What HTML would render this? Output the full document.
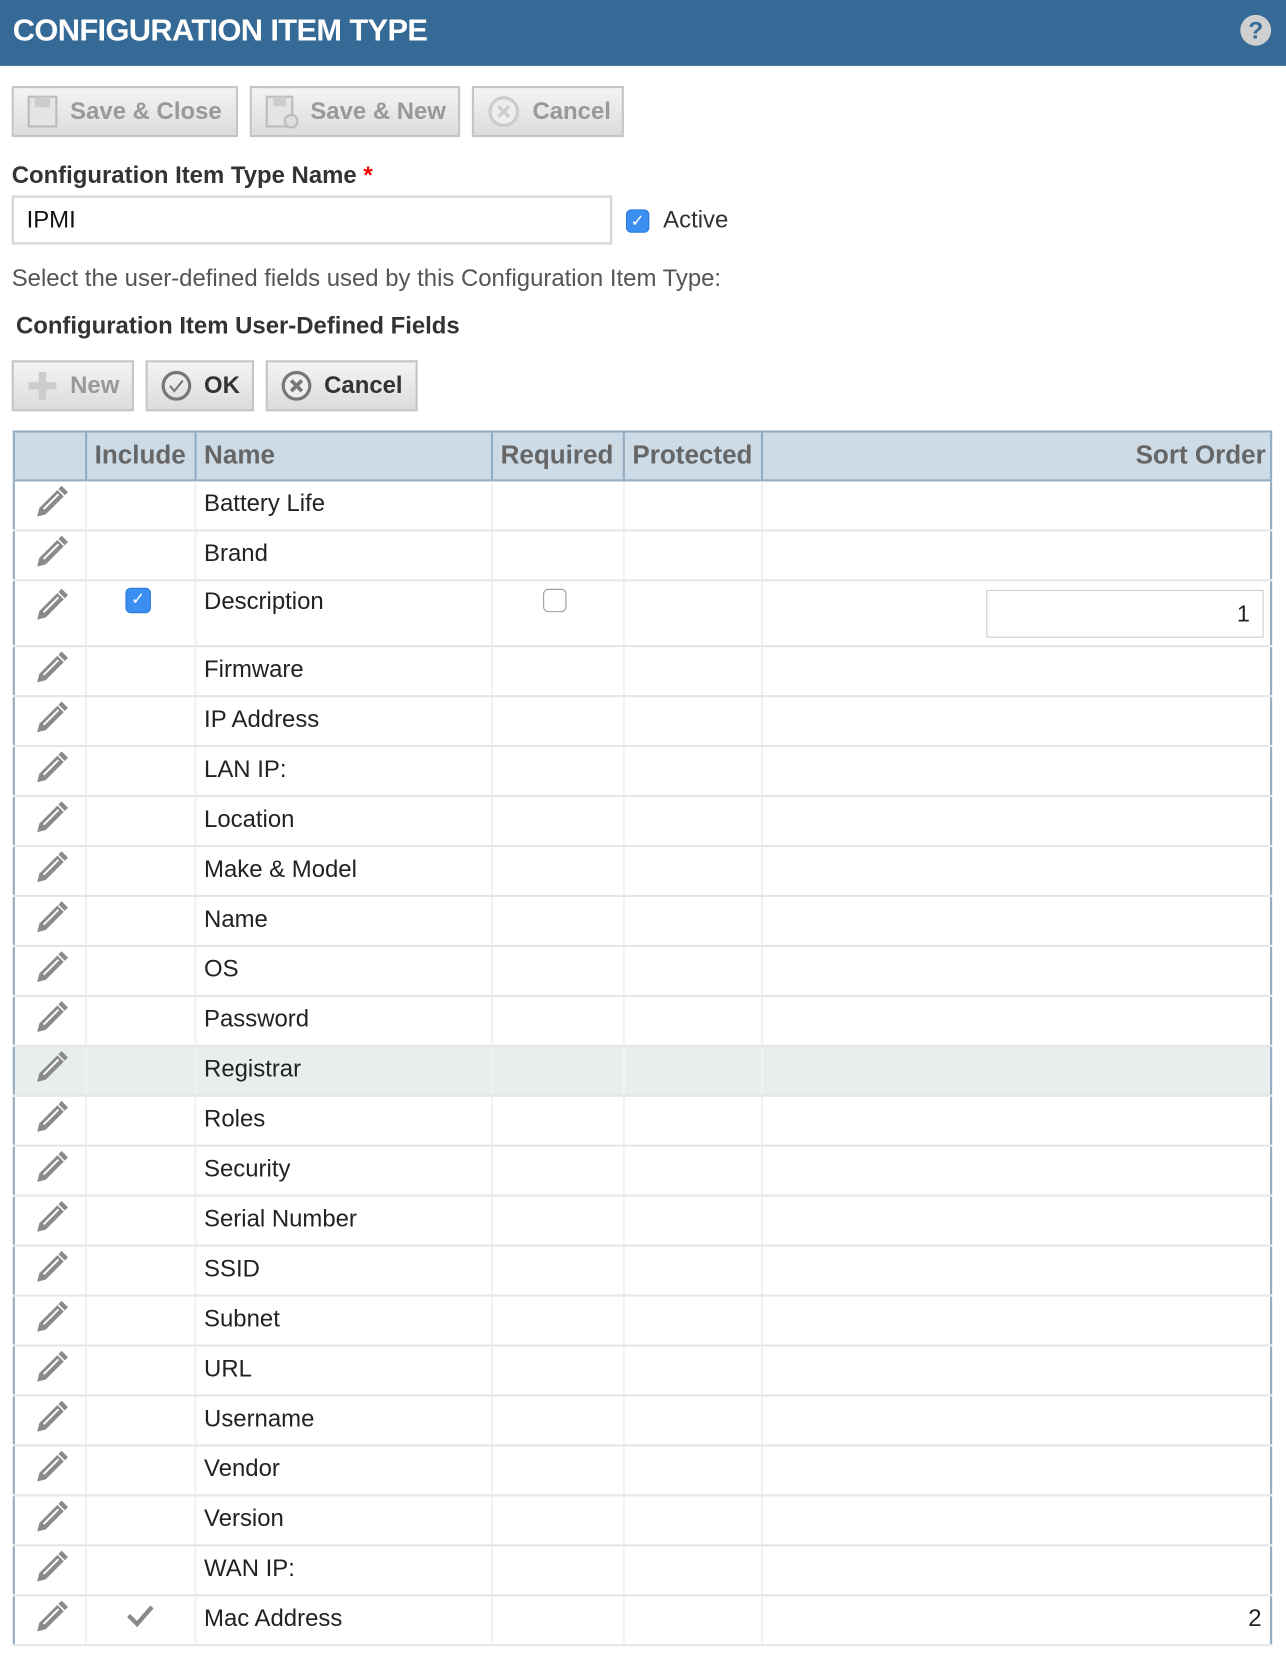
<!DOCTYPE html>
<html><head><meta charset="utf-8"><style>
*{box-sizing:border-box;margin:0;padding:0}
html,body{width:1286px;height:1666px;overflow:hidden;background:#fff}
#w{position:absolute;left:0;top:0;width:1210px;height:1568px;transform:scale(1.0628);transform-origin:0 0;font-family:"Liberation Sans",sans-serif;color:#333}
.a{position:absolute}
.hdr{left:0;top:0;width:1210px;height:62px;background:#366a96}
.title{left:12px;top:13px;color:#fff;font-weight:bold;font-size:29px;letter-spacing:-0.6px}
.help{left:1167px;top:14px;width:29px;height:29px;border-radius:50%;background:#cfcfcf;color:#366a96;font-weight:bold;font-size:23px;text-align:center;line-height:29px}
.btn{position:absolute;height:48px;border:2px solid #c4c4c4;background:linear-gradient(#f4f4f4,#dcdcdc);font-weight:bold;font-size:22.5px;color:#999;display:flex;align-items:center;padding-left:12px;gap:11px;white-space:nowrap}
.dark{color:#333}
.lbl{font-weight:bold;font-size:22.5px;color:#333}
.inp{border:2px solid #d4d4d4;background:#fff}
.cb{border-radius:5px;background:#3b8ff0;border:1px solid #2a78d8;color:#fff;text-align:center;font-size:16px;line-height:22px}
table{position:absolute;left:12px;top:405px;width:1185px;border-collapse:collapse;border:2px solid #93adc4;font-size:22.5px}
th{background:#cddbe6;height:46px;border-left:2px solid #93adc4;border-bottom:2px solid #93adc4;color:#666;font-size:24.5px;text-align:left;padding-left:7px;white-space:nowrap}
td{height:47px;border-left:2px solid #f2f2f2;border-bottom:2px solid #e6e6e6;padding-left:7px;padding-bottom:4px;vertical-align:middle;color:#222;white-space:nowrap}
tr.hl td{background:#e8eeee}
td.p{padding-left:18px;border-left:none;padding-bottom:2px}
</style></head><body><div id="w">
<div class="a hdr"></div>
<div class="a title">CONFIGURATION ITEM TYPE</div>
<div class="a help">?</div>

<div class="btn" style="left:11px;top:81px;width:213px"><svg width="30" height="32" viewBox="0 0 30 32"><rect x="2" y="2" width="26" height="28" fill="#e4e4e4" stroke="#bbb" stroke-width="2"/><rect x="8" y="2" width="14" height="10" fill="#ccc"/></svg>Save &amp; Close</div>
<div class="btn" style="left:235px;top:81px;width:198px"><svg width="32" height="32" viewBox="0 0 32 32"><rect x="2" y="2" width="24" height="28" fill="#e4e4e4" stroke="#bbb" stroke-width="2"/><rect x="8" y="2" width="12" height="9" fill="#ccc"/><circle cx="25" cy="25" r="6" fill="#ddd" stroke="#bbb" stroke-width="2"/></svg>Save &amp; New</div>
<div class="btn" style="left:444px;top:81px;width:143px"><svg width="32" height="32" viewBox="0 0 32 32"><circle cx="16" cy="16" r="13" fill="#eee" stroke="#ccc" stroke-width="3"/><path d="M11 11l10 10M21 11l-10 10" stroke="#ccc" stroke-width="3"/></svg>Cancel</div>

<div class="a lbl" style="left:11px;top:152px">Configuration Item Type Name <span style="color:#e00">*</span></div>
<div class="a inp" style="left:11px;top:184px;width:565px;height:46px"></div>
<div class="a" style="left:25px;top:194px;font-size:22.5px;color:#111">IPMI</div>
<div class="a cb" style="left:589px;top:197px;width:22px;height:22px">✓</div>
<div class="a" style="left:624px;top:194px;font-size:22.5px">Active</div>
<div class="a" style="left:11px;top:249px;font-size:22.5px;color:#555">Select the user-defined fields used by this Configuration Item Type:</div>
<div class="a lbl" style="left:15px;top:294px">Configuration Item User-Defined Fields</div>

<div class="btn" style="left:11px;top:339px;width:115px"><svg width="30" height="30" viewBox="0 0 30 30"><path d="M15 2v26M2 15h26" stroke="#ccc" stroke-width="7"/></svg>New</div>
<div class="btn dark" style="left:137px;top:339px;width:102px"><svg width="30" height="30" viewBox="0 0 30 30"><circle cx="15" cy="15" r="12.5" fill="none" stroke="#777" stroke-width="3"/><path d="M9 15l4 5 8-10" fill="none" stroke="#777" stroke-width="2"/></svg>OK</div>
<div class="btn dark" style="left:250px;top:339px;width:143px"><svg width="30" height="30" viewBox="0 0 30 30"><circle cx="15" cy="15" r="12.5" fill="#eee" stroke="#777" stroke-width="3"/><path d="M10 10l10 10M20 10l-10 10" stroke="#777" stroke-width="3.5"/></svg>Cancel</div>

<svg width="0" height="0" style="position:absolute"><defs><g id="pen"><path d="M3 30l2-8L22 5l6 6L11 28z" fill="#8a8a8a"/><path d="M9 23L23 9" stroke="#fff" stroke-width="1.8"/><path d="M23 4l3-3 6 6-3 3z" fill="#8a8a8a"/></g></defs></svg>
<table>
<tr><th style="width:68px;border-left:none"></th><th style="width:103px">Include</th><th style="width:279px">Name</th><th style="width:124px">Required</th><th style="width:130px">Protected</th><th style="text-align:right;padding-right:4px">Sort Order</th></tr>
<tr><td class="p"><svg width="32" height="32"><use href="#pen"/></svg></td><td></td><td>Battery Life</td><td></td><td></td><td></td></tr>
<tr><td class="p"><svg width="32" height="32"><use href="#pen"/></svg></td><td></td><td>Brand</td><td></td><td></td><td></td></tr>
<tr><td class="p" style="height:62px;vertical-align:top;padding-top:6px"><svg width="32" height="32"><use href="#pen"/></svg></td><td style="vertical-align:top;padding-top:6px;padding-left:36px"><div class="cb" style="width:24px;height:24px">✓</div></td><td style="vertical-align:top;padding-top:6px">Description</td><td style="vertical-align:top;padding-top:7px;padding-left:47px"><div style="width:22px;height:22px;border:1px solid #999;border-radius:5px"></div></td><td></td><td style="padding-left:210px;padding-bottom:0"><div class="inp" style="width:261px;height:45px;text-align:right;padding:9px 12px 0 0;font-size:22px;border-width:1px;border-color:#ccc">1</div></td></tr>
<tr><td class="p"><svg width="32" height="32"><use href="#pen"/></svg></td><td></td><td>Firmware</td><td></td><td></td><td></td></tr>
<tr><td class="p"><svg width="32" height="32"><use href="#pen"/></svg></td><td></td><td>IP Address</td><td></td><td></td><td></td></tr>
<tr><td class="p"><svg width="32" height="32"><use href="#pen"/></svg></td><td></td><td>LAN IP:</td><td></td><td></td><td></td></tr>
<tr><td class="p"><svg width="32" height="32"><use href="#pen"/></svg></td><td></td><td>Location</td><td></td><td></td><td></td></tr>
<tr><td class="p"><svg width="32" height="32"><use href="#pen"/></svg></td><td></td><td>Make &amp; Model</td><td></td><td></td><td></td></tr>
<tr><td class="p"><svg width="32" height="32"><use href="#pen"/></svg></td><td></td><td>Name</td><td></td><td></td><td></td></tr>
<tr><td class="p"><svg width="32" height="32"><use href="#pen"/></svg></td><td></td><td>OS</td><td></td><td></td><td></td></tr>
<tr><td class="p"><svg width="32" height="32"><use href="#pen"/></svg></td><td></td><td>Password</td><td></td><td></td><td></td></tr>
<tr class="hl"><td class="p"><svg width="32" height="32"><use href="#pen"/></svg></td><td></td><td>Registrar</td><td></td><td></td><td></td></tr>
<tr><td class="p"><svg width="32" height="32"><use href="#pen"/></svg></td><td></td><td>Roles</td><td></td><td></td><td></td></tr>
<tr><td class="p"><svg width="32" height="32"><use href="#pen"/></svg></td><td></td><td>Security</td><td></td><td></td><td></td></tr>
<tr><td class="p"><svg width="32" height="32"><use href="#pen"/></svg></td><td></td><td>Serial Number</td><td></td><td></td><td></td></tr>
<tr><td class="p"><svg width="32" height="32"><use href="#pen"/></svg></td><td></td><td>SSID</td><td></td><td></td><td></td></tr>
<tr><td class="p"><svg width="32" height="32"><use href="#pen"/></svg></td><td></td><td>Subnet</td><td></td><td></td><td></td></tr>
<tr><td class="p"><svg width="32" height="32"><use href="#pen"/></svg></td><td></td><td>URL</td><td></td><td></td><td></td></tr>
<tr><td class="p"><svg width="32" height="32"><use href="#pen"/></svg></td><td></td><td>Username</td><td></td><td></td><td></td></tr>
<tr><td class="p"><svg width="32" height="32"><use href="#pen"/></svg></td><td></td><td>Vendor</td><td></td><td></td><td></td></tr>
<tr><td class="p"><svg width="32" height="32"><use href="#pen"/></svg></td><td></td><td>Version</td><td></td><td></td><td></td></tr>
<tr><td class="p"><svg width="32" height="32"><use href="#pen"/></svg></td><td></td><td>WAN IP:</td><td></td><td></td><td></td></tr>
<tr><td class="p"><svg width="32" height="32"><use href="#pen"/></svg></td><td style="padding-left:36px"><svg width="28" height="22"><path d="M3 11l8 8L25 3" fill="none" stroke="#888" stroke-width="4"/></svg></td><td>Mac Address</td><td></td><td></td><td style="text-align:right;padding-right:8px">2</td></tr>
</table>
</div></body></html>
